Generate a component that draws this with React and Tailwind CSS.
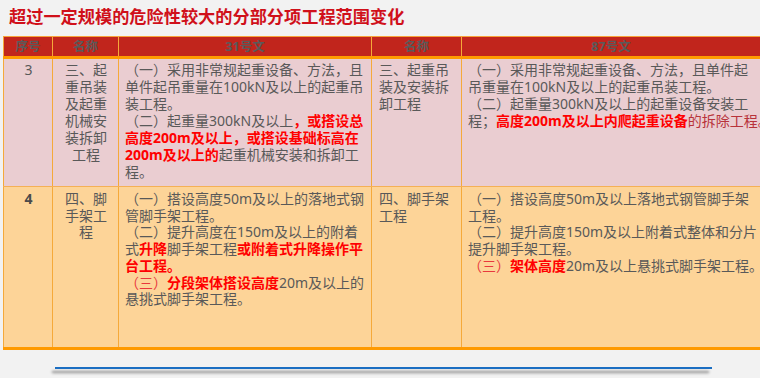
import React from "react";

const R = ({ children }) => <span className="text-[#ff0000] font-bold">{children}</span>;
const RL = ({ children }) => <span className="text-[#e8383d]">{children}</span>;
const DR = ({ children }) => <span className="text-[#b8333a]">{children}</span>;

function Lines({ lines, className = "" }) {
  return (
    <div className={"whitespace-nowrap " + className}>
      {lines.map((l, i) => (
        <div key={i}>{l}</div>
      ))}
    </div>
  );
}

export default function App() {
  const cell = "border-l border-[#f5a93a] overflow-hidden";
  return (
    <div
      className="w-[760px] h-[378px] bg-[#f2f2f2] overflow-hidden text-[#595959]"
      style={{ fontFamily: '"Noto Sans", "Noto Sans CJK SC", sans-serif' }}
    >
      <div className="h-[36px] pt-[7px] pl-[9px] text-[17.2px] leading-[20px] font-bold text-[#d0101a]">
        超过一定规模的危险性较大的分部分项工程范围变化
      </div>

      <div className="ml-[3px] w-[760px]">
        {/* header */}
        <div className="grid grid-cols-[49px_66px_253px_90px_302px] h-[23px] bg-[#c1251c] border-t border-[#f7a238] border-b-[3px] border-b-[#ff9a00] text-[12.5px] leading-[19px] font-bold text-[#5a5a5a]">
          <div className={cell + " text-center"}>序号</div>
          <div className={cell + " text-center"}>名称</div>
          <div className={cell + " text-center"}>31号文</div>
          <div className={cell + " text-center"}>名称</div>
          <div className={cell + " text-center pr-[3px]"}>87号文</div>
        </div>

        {/* row 3 */}
        <div className="grid grid-cols-[49px_66px_253px_90px_302px] h-[128px] bg-[#eacdd1] border-b border-[#f5b055] text-[14px] leading-[17px]">
          <div className={cell + " text-center pt-[2px] pl-[1px]"}>3</div>
          <div className={cell + " pt-[2px]"}>
            <Lines className="text-center pl-[1px]" lines={["三、起", "重吊装", "及起重", "机械安", "装拆卸", "工程"]} />
          </div>
          <div className={cell + " pt-[2px] pl-[6px]"}>
            <Lines
              lines={[
                "（一）采用非常规起重设备、方法，且",
                "单件起吊重量在100kN及以上的起重吊",
                "装工程。",
                <>（二）起重量300kN及以上<R>，或搭设总</R></>,
                <R>高度200m及以上，或搭设基础标高在</R>,
                <><R>200m及以上的</R>起重机械安装和拆卸工</>,
                "程。",
              ]}
            />
          </div>
          <div className={cell + " pt-[2px] pl-[7px]"}>
            <Lines lines={["三、起重吊", "装及安装拆", "卸工程"]} />
          </div>
          <div className={cell + " pt-[2px] pl-[6px]"}>
            <Lines
              lines={[
                "（一）采用非常规起重设备、方法，且单件起",
                "吊重量在100kN及以上的起重吊装工程。",
                "（二）起重量300kN及以上的起重设备安装工",
                <>程；<R>高度200m及以上内爬起重设备</R><DR>的拆除工程。</DR></>,
              ]}
            />
          </div>
        </div>

        {/* row 4 */}
        <div className="grid grid-cols-[49px_66px_253px_90px_302px] h-[163px] bg-[#fdd498] border-b-[3px] border-[#ff9a00] text-[14px] leading-[16.7px]">
          <div className={cell + " text-center pt-[4px] pl-[1px] font-bold text-[#4a4a4a]"}>4</div>
          <div className={cell + " pt-[4px]"}>
            <Lines className="text-center pl-[1px]" lines={["四、脚", "手架工", "程"]} />
          </div>
          <div className={cell + " pt-[4px] pl-[6px]"}>
            <Lines
              lines={[
                "（一）搭设高度50m及以上的落地式钢",
                "管脚手架工程。",
                "（二）提升高度在150m及以上的附着",
                <>式<R>升降</R>脚手架工程<R>或附着式升降操作平</R></>,
                <R>台工程。</R>,
                <><RL>（三）</RL><R>分段架体搭设高度</R>20m及以上的</>,
                "悬挑式脚手架工程。",
              ]}
            />
          </div>
          <div className={cell + " pt-[4px] pl-[7px]"}>
            <Lines lines={["四、脚手架", "工程"]} />
          </div>
          <div className={cell + " pt-[4px] pl-[6px]"}>
            <Lines
              lines={[
                "（一）搭设高度50m及以上落地式钢管脚手架",
                "工程。",
                "（二）提升高度150m及以上附着式整体和分片",
                "提升脚手架工程。",
                <><RL>（三）</RL><R>架体高度</R>20m及以上悬挑式脚手架工程。</>,
              ]}
            />
          </div>
        </div>
      </div>

      <div className="mt-[17px] ml-[55px] w-[657px] h-[2px] bg-[#1b6ec2] shadow-[-3px_4px_3px_rgba(0,0,0,0.45)]" />
    </div>
  );
}
